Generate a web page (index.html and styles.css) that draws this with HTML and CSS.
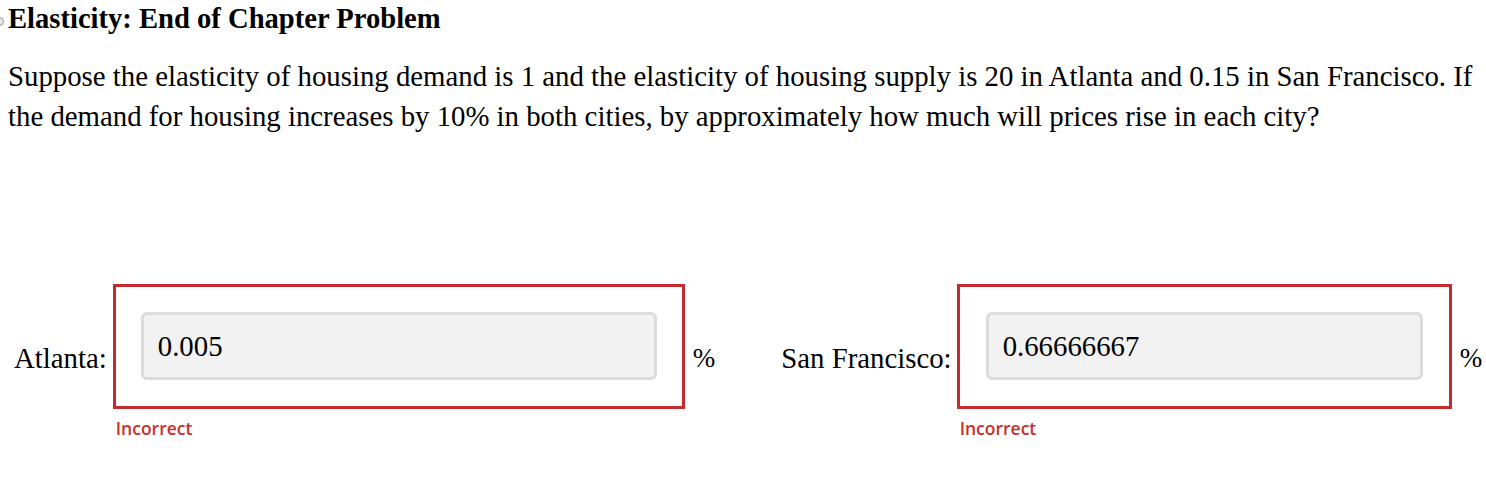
FILE: index.html
```html
<!DOCTYPE html>
<html>
<head>
<meta charset="utf-8">
<link rel="stylesheet" href="styles.css">
</head>
<body>
<div class="page">
  <span class="marker"></span>
  <h1 class="title">Elasticity: End of Chapter Problem</h1>
  <p class="question">Suppose the elasticity of housing demand is 1 and the elasticity of housing supply is 20 in Atlanta and 0.15 in San Francisco. If the demand for housing increases by 10% in both cities, by approximately how much will prices rise in each city?</p>
  <div class="answers">
    <span class="label label-atl">Atlanta:</span>
    <div class="field">
      <div class="box box-atl"><div class="input input-atl">0.005</div></div>
      <div class="feedback">Incorrect</div>
    </div>
    <span class="unit">%</span>
    <span class="label label-sf">San Francisco:</span>
    <div class="field">
      <div class="box box-sf"><div class="input input-sf">0.66666667</div></div>
      <div class="feedback">Incorrect</div>
    </div>
    <span class="unit">%</span>
  </div>
</div>
</body>
</html>
```

FILE: styles.css
```css
html, body {
  margin: 0;
  padding: 0;
  background: #ffffff;
}
.page {
  position: relative;
  padding: 6px 8px 0 8px;
  font-family: "Liberation Serif", "Times New Roman", serif;
  color: #000;
}
.marker {
  position: absolute;
  left: -5px;
  top: 17px;
  width: 7px;
  height: 7px;
  border: 1.5px solid #9a9a9a;
  border-radius: 50%;
  background: #e8e8e8;
}
.title {
  margin: 0;
  font-size: 28.6px;
  line-height: 26px;
  font-weight: bold;
}
.question {
  margin: 24px 0 0 0;
  font-size: 28.8px;
  line-height: 40px;
}
.answers {
  display: flex;
  align-items: flex-start;
  margin-top: 148px;
}
.answers > * {
  flex-shrink: 0;
}
.label, .unit {
  font-size: 28.8px;
  line-height: 32px;
  margin-top: 58px;
  white-space: nowrap;
}
.label-atl {
  margin-left: 6px;
  margin-right: 6px;
}
.label-sf {
  margin-left: 66px;
  margin-right: 5px;
}
.unit {
  margin-left: 8px;
  font-size: 27px;
}
.field {
  display: flex;
  flex-direction: column;
}
.box {
  border: 3px solid #c42b2e;
  padding: 25px 25px 26px 25px;
}
.box-atl {
  width: 516px;
}
.box-sf {
  width: 437px;
  padding-left: 26px;
  padding-right: 26px;
}
.input {
  box-sizing: border-box;
  height: 68px;
  background: #f2f2f2;
  border: 3px solid #dcdcdc;
  border-radius: 6px;
  padding: 0 14px;
  font-size: 28.8px;
  line-height: 62px;
  white-space: nowrap;
}
.feedback {
  margin: 9px 0 0 3px;
  font-family: "Open Sans", "Liberation Sans", sans-serif;
  font-weight: 600;
  font-size: 17.5px;
  line-height: 20px;
  color: #c9302c;
}
```
